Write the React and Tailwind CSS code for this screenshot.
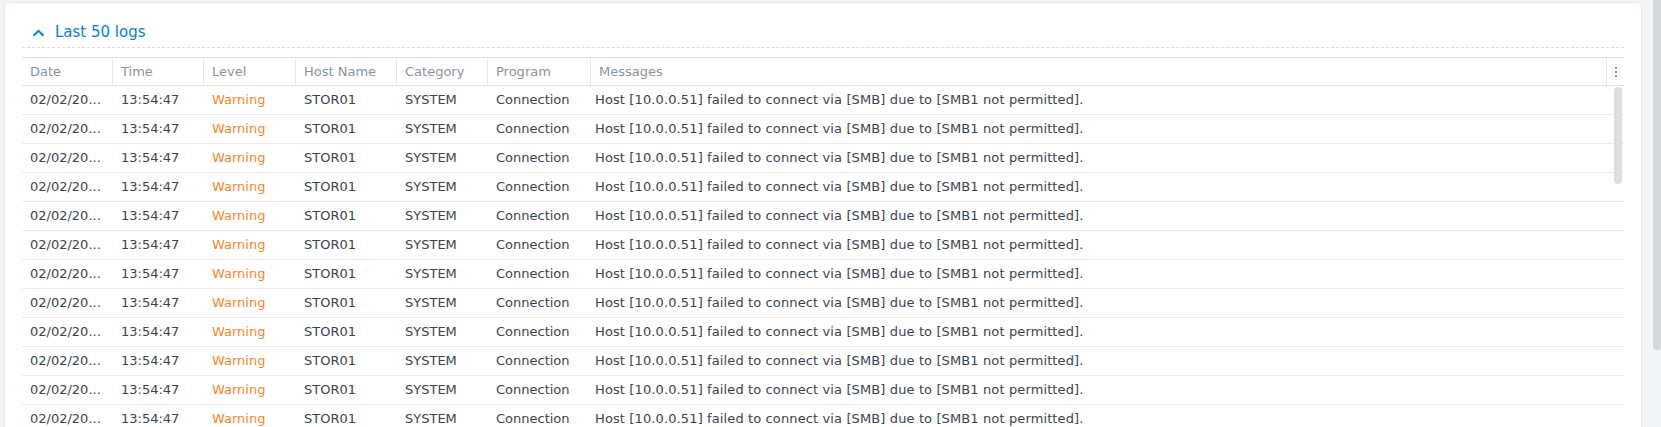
const cols = [
  { key: 'date', label: 'Date', w: 'w-[91px]' },
  { key: 'time', label: 'Time', w: 'w-[91px]' },
  { key: 'level', label: 'Level', w: 'w-[92px]' },
  { key: 'host', label: 'Host Name', w: 'w-[101px]' },
  { key: 'cat', label: 'Category', w: 'w-[91px]' },
  { key: 'prog', label: 'Program', w: 'w-[103px]' },
]

const row = {
  date: '02/02/20...',
  time: '13:54:47',
  level: 'Warning',
  host: 'STOR01',
  cat: 'SYSTEM',
  prog: 'Connection',
  msg: 'Host [10.0.0.51] failed to connect via [SMB] due to [SMB1 not permitted].',
}

const rows = Array.from({ length: 13 }, () => row)

export default function App() {
  return (
    <div className="w-[1661px] h-[427px] overflow-hidden bg-[#f1f5f8] flex font-['DejaVu_Sans',sans-serif]">
      <div className="pl-[4px] pt-[2px]">
        <div className="w-[1638px] h-[460px] bg-white border border-[#e3e8ed] rounded-[4px] px-[17px]">
          <div className="h-[45px] flex items-center pt-[15px] border-b border-dashed border-[#d9dee3]">
            <svg width="13" height="8" viewBox="0 0 13 8" className="ml-[10px] text-[#0a7de0]">
              <path d="M1.5 6.8 L6.5 1.8 L11.5 6.8" fill="none" stroke="currentColor" strokeWidth="2" />
            </svg>
            <span className="ml-[10px] text-[15px] text-[#0a7de0]">Last 50 logs</span>
          </div>

          <div className="mt-[9px] relative">
            <div className="flex h-[29px] border-t border-b border-[#d9e3ec] text-[13px] text-[#8a949d]">
              {cols.map(c => (
                <div key={c.key} className={`${c.w} shrink-0 border-r border-[#e3e8ee] flex items-center px-[8px] whitespace-nowrap`}>
                  {c.label}
                </div>
              ))}
              <div className="flex-1 flex items-center px-[8px] border-r border-[#e3e8ee]">Messages</div>
              <div className="w-[17px] shrink-0 flex flex-col items-center justify-center gap-[2px]">
                <span className="w-[2px] h-[2px] bg-[#8a949d]" />
                <span className="w-[2px] h-[2px] bg-[#8a949d]" />
                <span className="w-[2px] h-[2px] bg-[#8a949d]" />
              </div>
            </div>

            {rows.map((r, i) => (
              <div key={i} className="flex h-[29px] border-b border-[#e8ecf0] text-[13px] text-[#3b444d]">
                {cols.map(c => (
                  <div
                    key={c.key}
                    className={`${c.w} shrink-0 flex items-center px-[8px] whitespace-nowrap overflow-hidden ${c.key === 'level' ? 'text-[#f6862a]' : ''}`}
                  >
                    {r[c.key]}
                  </div>
                ))}
                <div className="flex-1 flex items-center px-[4px] whitespace-nowrap tracking-[0.12px]">{r.msg}</div>
              </div>
            ))}

            <div className="absolute right-[2px] top-[30px] w-[8px] h-[97px] rounded-full bg-[#dedede]" />
          </div>
        </div>
      </div>
      <div className="ml-auto w-[8px] h-[350px] bg-[#d5d9dd] rounded-b-[4px]" />
    </div>
  )
}
